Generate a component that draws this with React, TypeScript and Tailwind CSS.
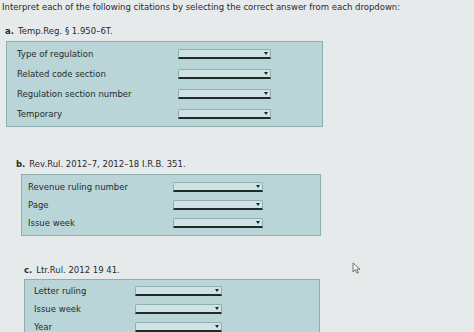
import React from 'react'

type Section = {
  letter: string
  cite: string
  labelCls: string
  boxCls: string
  rowH: string
  padL: string
  selX: string
  selW: string
  rows: string[]
}

const sections: Section[] = [
  {
    letter: 'a.',
    cite: 'Temp.Reg. § 1.950–6T.',
    labelCls: 'mt-[15px] ml-[5px]',
    boxCls: 'mt-[5px] ml-[6px] w-[317px] py-[2px]',
    rowH: 'h-[20px]',
    padL: 'pl-[10px]',
    selX: 'w-[161px]',
    selW: 'w-[93px]',
    rows: ['Type of regulation', 'Related code section', 'Regulation section number', 'Temporary'],
  },
  {
    letter: 'b.',
    cite: 'Rev.Rul. 2012–7, 2012–18 I.R.B. 351.',
    labelCls: 'mt-[33px] ml-[16px]',
    boxCls: 'mt-[5px] ml-[21px] w-[300px] py-[3px]',
    rowH: 'h-[18px]',
    padL: 'pl-[6px]',
    selX: 'w-[145px]',
    selW: 'w-[90px]',
    rows: ['Revenue ruling number', 'Page', 'Issue week'],
  },
  {
    letter: 'c.',
    cite: 'Ltr.Rul. 2012 19 41.',
    labelCls: 'mt-[30px] ml-[24px]',
    boxCls: 'mt-[4px] ml-[24px] w-[296px] py-[2px]',
    rowH: 'h-[18px]',
    padL: 'pl-[9px]',
    selX: 'w-[101px]',
    selW: 'w-[87px]',
    rows: ['Letter ruling', 'Issue week', 'Year'],
  },
]

function Dropdown({ width }: { width: string }) {
  return (
    <div className={`${width} h-[10px] relative bg-[#cfe3e4] border border-[#8fb0b2] border-b-2 border-b-[#1f2a2b] rounded-t-[2px]`}>
      <span className="absolute right-[2px] top-[2px] w-0 h-0 border-l-[2.5px] border-r-[2.5px] border-t-[3px] border-l-transparent border-r-transparent border-t-[#222]" />
    </div>
  )
}

export default function App() {
  return (
    <div className="relative w-[474px] h-[332px] overflow-hidden bg-[#e6eaeb] text-[#262b2c] text-[8.5px] leading-[9px]" style={{ fontFamily: '"DejaVu Sans", Verdana, sans-serif' }}>
      <div className="pt-[3px] pl-[2px]">Interpret each of the following citations by selecting the correct answer from each dropdown:</div>

      {sections.map(s => (
        <div key={s.letter}>
          <div className={s.labelCls}>
            <span className="font-bold mr-[4px]">{s.letter}</span>
            {s.cite}
          </div>
          <div className={`${s.boxCls} bg-[#b9d5d7] border border-[#8eaeb0]`}>
            {s.rows.map(r => (
              <div key={r} className={`flex items-center ${s.rowH} ${s.padL}`}>
                <div className={`${s.selX} shrink-0`}>{r}</div>
                <Dropdown width={s.selW} />
              </div>
            ))}
          </div>
        </div>
      ))}

      <svg className="absolute left-[352px] top-[262px]" width="9" height="12" viewBox="0 0 9 12">
        <path d="M1 1 L1 10 L3.3 7.8 L5 11.2 L6.4 10.5 L4.8 7.2 L8 7.2 Z" fill="#f4f6f6" stroke="#555" strokeWidth="0.8" strokeLinejoin="round" />
      </svg>
    </div>
  )
}
